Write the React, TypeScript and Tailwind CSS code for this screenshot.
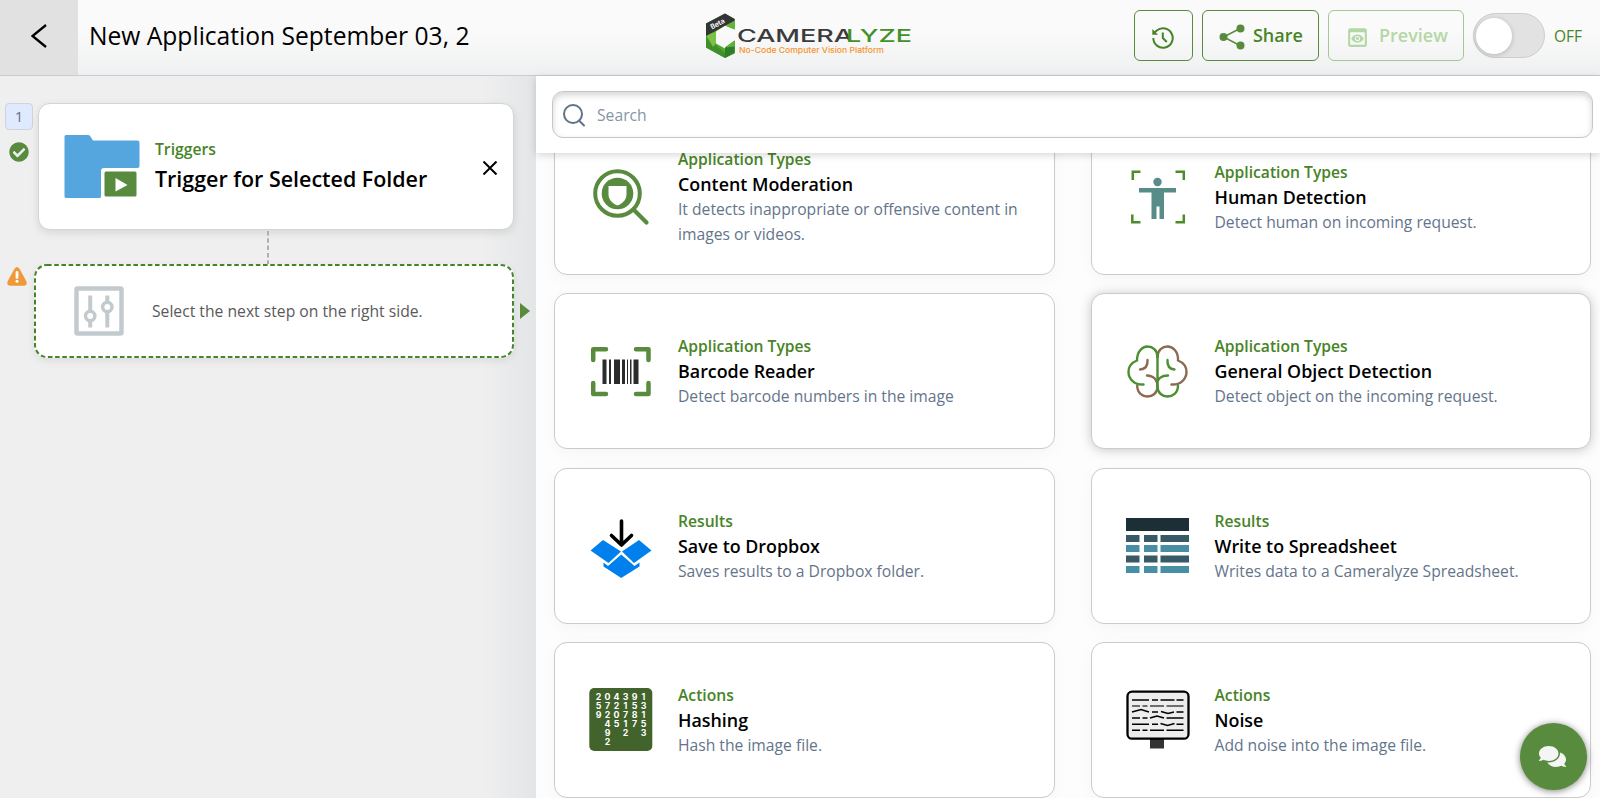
import { ReactNode } from 'react'
import { FaCheckCircle, FaComments } from 'react-icons/fa'
import { MdPreview } from 'react-icons/md'

interface Step {
  type: string
  title: string
  text: string
  icon: ReactNode
  active?: boolean
}

// ── Logo ──────────────────────────────────────────────────────
function Logo() {
  return (
    <svg width="210" height="50" viewBox="0 0 210 50" className="shrink-0">
      <path d="M2 15.5 21 5.500l9.700 5.500V21.500L21 17.500l-9 6v12l9 5 9.700-7v12L21 50 2 39.500z" fill="#55a630" />
      <path d="M2 29v10.500L21 50v-5z" fill="#3f8f2b" />
      <path d="M2 27l10-3v11l-3 4z" fill="#7cc242" />
      <path d="M21 39.500l9.700-7v12L21 50z" fill="#2f7d27" />
      <path d="M21 39.500l9.700-7v6z" fill="#5fb336" />
      <path d="M20 17l10.700-6v10.500z" fill="#5fb336" />
      <path d="M2 15.500 21 5.500l9.700 5.500v1.500L2 28z" fill="#333435" />
      <text x="0" y="0" transform="translate(8 21.500) rotate(-28)" fill="#fff" fontSize="7" fontFamily="Inter, sans-serif" fontWeight="600" textLength="15">Beta</text>
      <text x="33" y="33.500" fill="#3b3b3d" fontSize="17.500" fontFamily="Inter, sans-serif" fontWeight="500" textLength="116" lengthAdjust="spacingAndGlyphs">CAMERA</text>
      <text x="142" y="33.500" fill="#43902a" fontSize="17.500" fontFamily="Inter, sans-serif" fontWeight="500" textLength="66" lengthAdjust="spacingAndGlyphs">LYZE</text>
      <text x="35" y="44.500" fill="#f7942a" fontSize="8" fontFamily="Inter, sans-serif" fontWeight="500" textLength="145" lengthAdjust="spacingAndGlyphs">No-Code Computer Vision Platform</text>
    </svg>
  )
}

// ── Step icons ────────────────────────────────────────────────
function FolderIcon() {
  return (
    <svg width="76" height="64" viewBox="0 0 76 64" className="shrink-0">
      <path d="M2 0h22q1.500 0 2.300 1.300L29 5.500h44.500q2 0 2 2V31q0 2-2 2H40q-3 0-3 3v25.500q0 1.500-1.500 1.500H2q-1.500 0-1.500-1.500V1.500Q.5 0 2 0z" fill="#55a6de" />
      <rect x="40.500" y="36.500" width="32" height="25" rx="1.500" fill="#588b3e" />
      <path d="M51.500 43v13.500L63.500 50z" fill="#fff" />
    </svg>
  )
}

function SlidersIcon() {
  return (
    <svg width="50" height="50" viewBox="0 0 50 50" fill="none" stroke="#c2cace" className="shrink-0">
      <rect x="2.500" y="2.500" width="45" height="45" rx="1" strokeWidth="4.500" />
      <path d="M16.200 9.500v15M16.200 34v7.500M33.300 9.500V15M33.300 25v16.500" strokeWidth="4" />
      <circle cx="16.200" cy="30" r="4.700" strokeWidth="3.500" />
      <circle cx="33.300" cy="21" r="4.700" strokeWidth="3.500" />
    </svg>
  )
}

function WarningIcon() {
  return (
    <svg width="20" height="19" viewBox="0 0 20 19">
      <path d="M7.500 1.700Q10-1.500 12.500 1.700l6.600 12q2 5-2.500 5H3.400q-4.500 0-2.500-5z" fill="#ee9a3a" />
      <path d="M10 5.500v5" stroke="#fff" strokeWidth="2.800" strokeLinecap="round" />
      <circle cx="10" cy="14.300" r="1.500" fill="#fff" />
    </svg>
  )
}

function HistoryIcon() {
  return (
    <svg width="22" height="22" viewBox="0 0 22 22" fill="none" stroke="#478426" strokeWidth="2" className="mt-1">
      <path d="M1.300 11A9.700 9.700 0 1 0 4.800 3.600L2.500 5.500" />
      <path d="M.3 2v5.800h5.800z" fill="#478426" stroke="none" />
      <path d="M10.800 5.500V11l4 4" />
    </svg>
  )
}

function ModerationIcon() {
  return (
    <svg width="64" height="64" viewBox="0 0 64 64" fill="none" className="shrink-0">
      <circle cx="28.500" cy="28.500" r="22.300" stroke="#588b3e" strokeWidth="4" />
      <circle cx="28.500" cy="28.500" r="15.800" fill="#588b3e" />
      <path d="M19.500 21h18v8c0 6-4 9.500-9 11.500-5-2-9-5.500-9-11.500z" fill="#fff" />
      <path d="M44.500 44.500 57.500 57.500" stroke="#588b3e" strokeWidth="4.200" strokeLinecap="round" />
    </svg>
  )
}

function HumanIcon() {
  return (
    <svg width="64" height="64" viewBox="0 0 64 64" fill="none" className="shrink-0">
      <path d="M6.800 15V6.800H14.500M49.500 6.800h8.300V15M57.800 49.500v7.700H49.500M14.500 57.200H6.300V49.500" stroke="#4c8c2b" strokeWidth="2.500" />
      <circle cx="31.500" cy="17" r="4.200" fill="#578c88" />
      <path d="M13 23h37v4.500H38v26.500H33.500V41.500h-3v12.500h-5V27.500H13z" fill="#578c88" />
    </svg>
  )
}

function BarcodeIcon() {
  return (
    <svg width="64" height="64" viewBox="0 0 64 64" className="shrink-0">
      <path d="M4.200 21V10.200H17M47 10.200h12.500V21M59.500 44v11H47M17 55H4.200V44" fill="none" stroke="#588b3e" strokeWidth="4.500" strokeLinecap="round" strokeLinejoin="round" />
      <path d="M13.500 20.500h4v24.500h-4zM20 20.500h2v24.500h-2zM25 20.500h6v24.500h-6zM33 20.500h3v24.500h-3zM38 20.500h1v24.500h-1zM41 20.500h1.500v24.500H41zM44.500 20.500h5v24.500h-5z" fill="#2c2c2c" />
    </svg>
  )
}

function BrainIcon() {
  return (
    <svg width="64" height="64" viewBox="0 0 64 64" fill="none" strokeWidth="2.400" strokeLinecap="round" className="shrink-0">
      <path d="M11.200 46.500C11.200 54 16.500 57.500 21.500 57.500s10-3.500 10-9.500c0-7-4-11.500-10.500-11.500" stroke="#8a6a50" />
      <path d="M31.500 18C31.500 11 36.500 7.500 41.500 7.500S52.500 12 52 21.500c5 2 8.500 6 8.500 11.500 0 7-6 13-15 12.500" stroke="#8a6a50" />
      <path d="M31.500 18C31.500 11 26.500 7.500 21.500 7.500S11 12 11 21.500C6 23.500 2.500 27.500 2.500 33c0 7 6 13 15 12.500" stroke="#4b8f31" />
      <path d="M31.500 18V48c0 6 5 9.500 10 9.500S52 54 52 46.500M31.500 44.500c0-5 4-8 10.500-8" stroke="#4b8f31" />
      <path d="M21.500 21c.500 6-2 9-7.500 9.500" stroke="#8a6a50" />
      <path d="M41.500 21c-.500 6 2 9 7 9.500" stroke="#4b8f31" />
    </svg>
  )
}

function DropboxIcon() {
  return (
    <svg width="64" height="64" viewBox="0 0 64 64" className="shrink-0">
      <g fill="#0080ed">
        <path d="M14 26 32 37.500 19.500 49 1.500 36.500z" />
        <path d="M50 26 33 37.500 45 49 62.500 36.500z" />
        <path d="M32.200 40.500 45.500 52l5-3.500v4L32.200 64 14.500 52.500v-4L19 52z" />
      </g>
      <path d="M32.500 7V31M22.500 21.500l10 9.500 10-9.500" fill="none" stroke="#000" strokeWidth="3.600" strokeLinecap="round" strokeLinejoin="round" />
    </svg>
  )
}

function SpreadsheetIcon() {
  return (
    <svg width="64" height="56" viewBox="0 0 64 56" className="shrink-0">
      <path d="M0 0h63v13H0z" fill="#1c2f36" />
      <path d="M0 17h13.500v7H0zM18 17h13.500v7H18zM34.500 17H63v7H34.500zM0 37.500h13.500v7H0zM18 37.500h13.500v7H18zM34.500 37.500H63v7H34.500z" fill="#375a66" />
      <path d="M0 27h13.500v7H0zM18 27h13.500v7H18zM34.500 27H63v7H34.500zM0 48h13.500v7H0zM18 48h13.500v7H18zM34.500 48H63v7H34.500z" fill="#488fa6" />
    </svg>
  )
}

const HASH_ROWS = ['204391', '572153', '920781', ' 45175', ' 9 2 3', ' 2    ']

function HashIcon() {
  return (
    <svg width="64" height="64" viewBox="0 0 64 64" className="shrink-0">
      <rect x=".3" y="0" width="63" height="63" rx="5" fill="#42642c" />
      <g fill="#fff" fontSize="8.800" fontWeight="700" fontFamily="Inter, sans-serif" textAnchor="middle">
        {HASH_ROWS.map((row, y) => row.split('').map((n, x) => n !== ' ' && (
          <text key={`${x}-${y}`} x={9.5 + x * 9} y={12.2 + y * 9}>{n}</text>
        )))}
      </g>
    </svg>
  )
}

function NoiseIcon() {
  return (
    <svg width="64" height="60" viewBox="0 0 64 60" fill="none" className="shrink-0">
      <path d="M24 48.500h14v10H24z" fill="#333" />
      <rect x="1.500" y="1.700" width="61" height="47" rx="4.500" fill="#ededed" stroke="#000" strokeWidth="2.300" />
      <path d="M6 10h17M26 10h6M34.500 10h14M50.500 10h7M6 28h8M16.500 28h5M40.500 28h17M6 34.200h17M26 34.200h6M50.500 34.200h7M6 40.200h8M16.500 40.200h5M24 40.200h14M40.500 40.200h17M26 22h6M50.500 22h7" stroke="#000" strokeWidth="1.600" />
      <path d="M6 16h8M16.500 16h5M24 16h14M40.500 16h17" stroke="#444" strokeWidth="1.600" />
      <path d="M6 22l9-2.500 8 2.500M35 21.500l7 2 6-1.500M24 28l7-2 7 2M34.500 33.500l7 2 7-2" stroke="#000" strokeWidth="1.600" />
    </svg>
  )
}

const STEPS: Step[] = [
  { type: 'Application Types', title: 'Content Moderation',       text: 'It detects inappropriate or offensive content in images or videos.', icon: <ModerationIcon /> },
  { type: 'Application Types', title: 'Human Detection',          text: 'Detect human on incoming request.',          icon: <HumanIcon /> },
  { type: 'Application Types', title: 'Barcode Reader',           text: 'Detect barcode numbers in the image',        icon: <BarcodeIcon /> },
  { type: 'Application Types', title: 'General Object Detection', text: 'Detect object on the incoming request.',     icon: <BrainIcon />, active: true },
  { type: 'Results',           title: 'Save to Dropbox',          text: 'Saves results to a Dropbox folder.',         icon: <DropboxIcon /> },
  { type: 'Results',           title: 'Write to Spreadsheet',     text: 'Writes data to a Cameralyze Spreadsheet.',   icon: <SpreadsheetIcon /> },
  { type: 'Actions',           title: 'Hashing',                  text: 'Hash the image file.',                       icon: <HashIcon /> },
  { type: 'Actions',           title: 'Noise',                    text: 'Add noise into the image file.',             icon: <NoiseIcon /> },
]

function StepCard({ step }: { step: Step }) {
  const shadow = step.active ? 'shadow-[0_1px_12px_rgba(0,0,0,0.22)]' : 'shadow-[0_4px_16px_rgba(0,0,0,0.035)]'
  return (
    <div className={`flex h-[156px] items-center gap-[25px] rounded-[13px] border border-[#cbcbcb] bg-white pl-[34px] pr-6 ${shadow}`}>
      {step.icon}
      <div className="pt-px text-[15.660px] leading-[25px]">
        <p className="font-semibold text-[#478426]">{step.type}</p>
        <p className="text-[17.880px] font-semibold text-black">{step.title}</p>
        <p className="text-[#64748b]">{step.text}</p>
      </div>
    </div>
  )
}

// ── Top bar ───────────────────────────────────────────────────
function Header() {
  return (
    <header className="flex h-[76px] shrink-0 items-stretch border-b border-[#cbcccd] bg-linear-to-b from-[#fafafa] from-40% to-[#eff0f1]">
      <button className="flex w-[78px] items-center justify-center bg-[#e1e1e1] pb-[3px]">
        <svg width="16" height="24" viewBox="0 0 16 24" fill="none" stroke="#000" strokeWidth="2.300">
          <path d="M15 1 1.500 12 15 23" />
        </svg>
      </button>
      <h1 className="w-[393px] overflow-hidden whitespace-nowrap pl-[11px] text-[24.600px] leading-[72px] text-black">New Application September 03, 2</h1>
      <div className="flex flex-1 items-start pl-[233px] pt-2"><Logo /></div>
      <div className="flex items-start gap-[9px] pr-[18px] pt-[10px] text-[18px] font-semibold text-[#478426]">
        <button className="flex h-[51px] w-[59px] items-center justify-center rounded-[6px] border border-[#588b3e]">
          <HistoryIcon />
        </button>
        <button className="flex h-[51px] w-[117px] items-center gap-[8px] rounded-[6px] border border-[#588b3e] pl-4">
          <svg width="26" height="26" viewBox="0 0 26 26" className="mt-0.5 shrink-0" fill="#588b3e">
            <path d="M21 4.500 4.500 13 21 21.500" fill="none" stroke="#588b3e" strokeWidth="1.500" />
            <circle cx="4.500" cy="13" r="4" /><circle cx="21.500" cy="4.500" r="4" /><circle cx="21.500" cy="21.500" r="4" />
          </svg>
          Share
        </button>
        <button className="flex h-[51px] w-[136px] items-center gap-[9px] rounded-[6px] border border-[#a3c894] pl-[16px] text-[#b4d7a5]">
          <MdPreview size={25} className="mt-1 shrink-0" />
          Preview
        </button>
        <div className="mt-[3px] flex h-[45px] w-[72px] items-center rounded-full border border-[#cdcdcd] bg-[#e2e2e2] pl-[2px]">
          <span className="size-9 rounded-full bg-white shadow-[0_1px_5px_rgba(0,0,0,0.2)]" />
        </div>
        <span className="text-[15.500px] font-normal leading-[52px]">OFF</span>
      </div>
    </header>
  )
}

// ── Application flow ──────────────────────────────────────────
function FlowPanel() {
  return (
    <aside className="flex w-[536px] shrink-0 flex-col bg-linear-to-r from-[#efefef] from-90% to-[#e3e5e7] pt-[27px]">
      <div className="flex">
        <div className="flex w-[38px] flex-col items-center gap-[12px]">
          <span className="flex h-[27px] w-7 items-center justify-center rounded-[4px] border border-[#cfd3da] bg-[#dfeaff] text-[15px] text-[#64748b]">1</span>
          <FaCheckCircle size={20} color="#588b3e" />
        </div>
        <div className="flex h-[127px] w-[476px] items-center rounded-[12px] border border-[#d4d4d4] bg-white pl-[25px] pr-[16px] shadow-[0_3px_8px_rgba(0,0,0,0.1)]">
          <FolderIcon />
          <div className="flex-1 pb-[3px] pl-[15px]">
            <p className="text-[15.700px] font-semibold leading-[27px] text-[#478426]">Triggers</p>
            <p className="text-[21.450px] font-semibold leading-8 text-black">Trigger for Selected Folder</p>
          </div>
          <svg width="14" height="14" viewBox="0 0 14 14" stroke="#000" strokeWidth="2" className="mt-[3px]">
            <path d="M.5.5l13 13M13.500.5l-13 13" />
          </svg>
        </div>
      </div>
      <svg width="2" height="34" className="ml-[267px] shrink-0">
        <path d="M1 1v33" stroke="#b0b0b0" strokeWidth="2" strokeDasharray="4.500 2.800" />
      </svg>
      <div className="flex">
        <div className="w-[34px] pl-[7px] pt-[3px]"><WarningIcon /></div>
        <div className="relative flex h-[94px] w-[480px] items-center gap-[28px] rounded-[13px] bg-white pl-10 shadow-[0_3px_8px_rgba(0,0,0,0.08)]">
          <svg className="absolute inset-0" width="480" height="94" fill="none">
            <rect x="1" y="1" width="478" height="92" rx="12" stroke="#44852a" strokeWidth="2" strokeDasharray="4.600 2.600" />
          </svg>
          <SlidersIcon />
          <p className="pt-0.5 text-[15.700px] text-[#5a5a5a]">Select the next step on the right side.</p>
        </div>
        <svg width="10" height="16" viewBox="0 0 10 16" className="ml-1.5 self-center" fill="#588b3e">
          <path d="M0 0v16l10-8z" />
        </svg>
      </div>
    </aside>
  )
}

export default function App() {
  return (
    <div className="relative flex h-[798px] w-[1600px] flex-col overflow-hidden bg-white font-['Open_Sans',sans-serif]">
      <Header />
      <div className="flex min-h-0 flex-1">
        <FlowPanel />
        <main className="flex flex-1 flex-col">
          {/* Search */}
          <div className="z-10 h-[77px] shrink-0 bg-white pl-4 pr-[7px] pt-[15px] shadow-[0_2px_8px_rgba(0,0,0,0.16)]">
            <div className="flex h-[47px] items-center gap-[11px] rounded-[11px] border border-[#c6c6c6] pl-[9px] pt-0.5 text-[15.700px] text-[#8595a8] shadow-[inset_0_3px_6px_rgba(0,0,0,0.17)]">
              <svg width="24" height="24" viewBox="0 0 24 24" fill="none" stroke="#5f7388" strokeWidth="2" className="-mt-0.5 shrink-0">
                <circle cx="11" cy="11" r="9" /><path d="M17 17.500l5 5" strokeLinecap="round" />
              </svg>
              Search
            </div>
          </div>
          <div className="min-h-0 flex-1 overflow-hidden bg-[#fdfdfd]">
            <div className="-mt-[34.200px] grid grid-cols-2 gap-x-[36px] gap-y-[18.400px] pl-[18px] pr-[9px]">
              {STEPS.map(step => <StepCard key={step.title} step={step} />)}
            </div>
          </div>
        </main>
      </div>
      {/* Support chat */}
      <button className="absolute bottom-2 right-[13px] flex size-[67px] items-center justify-center rounded-full bg-[#588b3e] pr-[3px] shadow-[0_1px_7px_rgba(0,0,0,0.5)]">
        <FaComments size={27} color="#f5f5f5" />
      </button>
    </div>
  )
}
